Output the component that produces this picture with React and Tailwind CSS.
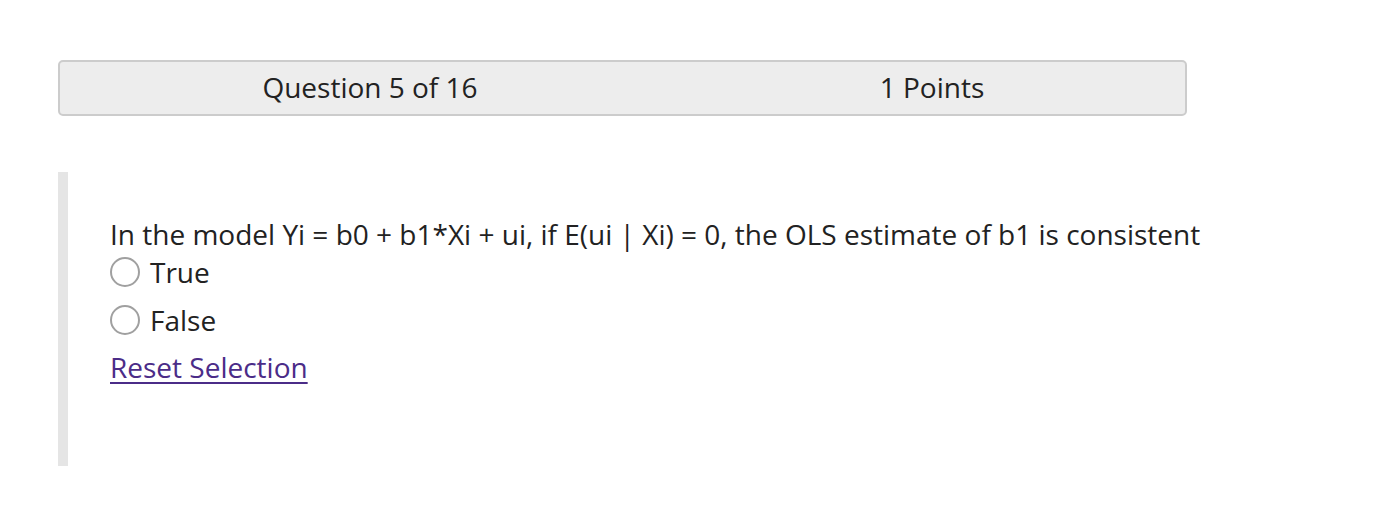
export default function App() {
  return (
    <div className="w-[1394px] h-[530px] bg-white text-[#222] relative" style={{ fontFamily: '"Open Sans", sans-serif' }}>
      <div className="pt-[60px] pl-[58px]">
        <div className="w-[1129px] h-[56px] bg-[#ededed] border-2 border-[#cccccc] rounded-[5px] flex items-center pb-[2px] text-[28px] leading-none">
          <div className="w-[620px] text-center">Question 5 of 16</div>
          <div className="w-[504px] text-center">1 Points</div>
        </div>
      </div>
      <div className="ml-[58px] mt-[56px] h-[294px] border-l-[10px] border-[#e5e5e5] pl-[42px] pt-[44px]">
        <div className="text-[28px] leading-[36px] whitespace-nowrap">In the model Yi = b0 + b1*Xi + ui, if E(ui | Xi) = 0, the OLS estimate of b1 is consistent</div>
        <div className="flex flex-col gap-[12px] mt-[2px]">
          {["True", "False"].map((t) => (
            <label key={t} className="flex items-center gap-[10px] h-[36px] text-[28px] leading-[36px]">
              <span className="w-[30px] h-[30px] rounded-full border-2 border-[#a0a0a0] bg-white shrink-0" />
              <span>{t}</span>
            </label>
          ))}
        </div>
        <a href="#" className="inline-block mt-[11px] text-[28px] leading-[36px] text-[#4b2c88] underline underline-offset-[4px]">Reset Selection</a>
      </div>
    </div>
  );
}
